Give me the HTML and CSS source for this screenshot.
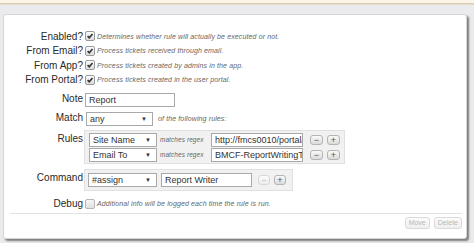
FILE: index.html
```html
<!DOCTYPE html>
<html lang="en">
<head>
    <meta charset="UTF-8">
    <title>Rule Editor</title>
    <link rel="stylesheet" href="styles.css">
</head>
<body>

<div class="topbar"></div>

<div class="card">
    <div class="row check-row">
        <label class="lbl">Enabled?</label>
        <span class="cb on"><svg viewBox="0 0 9 9"><path d="M1.8 4.6 L3.7 6.6 L7.3 2.2" /></svg></span>
        <span class="hint">Determines whether rule will actually be executed or not.</span>
    </div>
    <div class="row check-row">
        <label class="lbl">From Email?</label>
        <span class="cb on"><svg viewBox="0 0 9 9"><path d="M1.8 4.6 L3.7 6.6 L7.3 2.2" /></svg></span>
        <span class="hint">Process tickets received through email.</span>
    </div>
    <div class="row check-row">
        <label class="lbl">From App?</label>
        <span class="cb on"><svg viewBox="0 0 9 9"><path d="M1.8 4.6 L3.7 6.6 L7.3 2.2" /></svg></span>
        <span class="hint">Process tickets created by admins in the app.</span>
    </div>
    <div class="row check-row">
        <label class="lbl">From Portal?</label>
        <span class="cb on"><svg viewBox="0 0 9 9"><path d="M1.8 4.6 L3.7 6.6 L7.3 2.2" /></svg></span>
        <span class="hint">Process tickets created in the user portal.</span>
    </div>

    <div class="row note-row">
        <label class="lbl">Note</label>
        <div class="field note">Report</div>
    </div>

    <div class="row match-row">
        <label class="lbl">Match</label>
        <div class="select match">any<span class="arrow">▼</span></div>
        <span class="hint">of the following rules:</span>
    </div>

    <div class="row rules-row">
        <label class="lbl">Rules</label>
        <div class="group rules">
            <div class="line">
                <div class="select">Site Name<span class="arrow">▼</span></div>
                <span class="hint op">matches regex</span>
                <div class="field value">http://fmcs0010/portal/pa</div>
                <span class="btn-sm">−</span>
                <span class="btn-sm">+</span>
            </div>
            <div class="line">
                <div class="select">Email To<span class="arrow">▼</span></div>
                <span class="hint op">matches regex</span>
                <div class="field value">BMCF-ReportWritingTea</div>
                <span class="btn-sm">−</span>
                <span class="btn-sm">+</span>
            </div>
        </div>
    </div>

    <div class="row command-row">
        <label class="lbl">Command</label>
        <div class="group command">
            <div class="line">
                <div class="select cmd">#assign<span class="arrow">▼</span></div>
                <div class="field arg">Report Writer</div>
                <span class="btn-sm off">−</span>
                <span class="btn-sm">+</span>
            </div>
        </div>
    </div>

    <div class="row check-row debug-row">
        <label class="lbl">Debug</label>
        <span class="cb"></span>
        <span class="hint">Additional info will be logged each time the rule is run.</span>
    </div>

    <div class="actions">
        <span class="btn-dis">Move</span>
        <span class="btn-dis">Delete</span>
    </div>
</div>

</body>
</html>
```

FILE: styles.css
```css
body {
    font-family: "Liberation Sans", Arial, sans-serif;
    background-color: #ebebed;
    color: #2a2a2a;
    margin: 0;
    padding: 0;
    width: 474px;
    height: 243px;
    overflow: hidden;
}

.topbar {
    height: 3px;
    background-color: #fbf5e6;
    border-bottom: 1px solid #d9ccb2;
    box-shadow: 0 1px 1px #e4dccb;
}

.card {
    margin: 10px 7px 0 3px;
    height: 225px;
    background-color: #fff;
    border: 1px solid #d6d6d6;
    border-radius: 3px;
    box-shadow: 2px 2px 2px #7d7d7d;
    box-sizing: border-box;
    padding-top: 14px;
}

.row {
    display: flex;
    align-items: center;
}

.lbl {
    width: 79px;
    flex: none;
    text-align: right;
    font-size: 10px;
    margin-right: 2px;
}

.check-row {
    height: 14px;
}

.check-row + .check-row {
    margin-top: 0.5px;
}

.cb {
    width: 8px;
    height: 8px;
    border: 1px solid #9a9a9a;
    border-radius: 2px;
    background: linear-gradient(#fdfdfd, #dcdcdc);
    margin: 0 2px 0 0;
    flex: none;
}

.cb svg {
    width: 8px;
    height: 8px;
    display: block;
}

.cb path {
    fill: none;
    stroke: #333;
    stroke-width: 1.8;
}

.hint {
    font-size: 7px;
    font-style: italic;
    color: #666;
    letter-spacing: 0.12px;
    white-space: nowrap;
}

.field, .select {
    height: 14px;
    box-sizing: border-box;
    border: 1px solid #a9a9a9;
    background-color: #fff;
    font-size: 9px;
    color: #333;
    padding: 0 3px;
    line-height: 12px;
    white-space: nowrap;
    overflow: hidden;
    text-overflow: clip;
}

.note-row {
    margin-top: 6px;
}

.note-row .lbl, .match-row .lbl {
    align-self: flex-start;
}

.field.note {
    width: 90px;
}

.match-row {
    margin-top: 5px;
}

.select {
    position: relative;
    width: 68px;
    flex: none;
}

.select.match {
    width: 67px;
    margin-right: 5px;
    margin-left: 1px;
}

.arrow {
    position: absolute;
    right: 5px;
    top: 0;
    font-size: 6px;
    color: #333;
}

.rules-row {
    margin-top: 4px;
    align-items: flex-start;
}

.rules-row .lbl, .command-row .lbl {
    margin-top: 3px;
}

.group {
    background-color: #f1f1f1;
    border: 1px solid #e0e0e0;
    display: flex;
    flex-direction: column;
    margin-left: -1px;
}

.group.rules {
    padding: 2px 4px 1px 4px;
    gap: 1px;
}

.line {
    display: flex;
    align-items: center;
}

.op {
    margin: 0 3px;
    width: 48px;
    font-size: 6.4px;
    flex: none;
}

.field.value {
    width: 92px;
    margin-right: 7px;
    padding-right: 0;
    flex: none;
}

.btn-sm {
    width: 13px;
    height: 10px;
    box-sizing: border-box;
    border: 1px solid #b4b4b4;
    border-radius: 3px;
    background: linear-gradient(#fafafa, #dadada);
    font-size: 9px;
    line-height: 8px;
    text-align: center;
    color: #555;
    flex: none;
}

.btn-sm + .btn-sm {
    margin-left: 4px;
}

.btn-sm.off {
    color: #bbb;
    border-color: #d8d8d8;
    background: linear-gradient(#fbfbfb, #ececec);
}

.command-row {
    margin-top: 5px;
    align-items: flex-start;
}

.group.command {
    padding: 3px 6px 3px 3px;
}

.group.command .btn-sm {
    width: 12px;
}

.select.cmd {
    width: 69px;
    margin-right: 4px;
}

.field.arg {
    width: 91px;
    margin-right: 6px;
}

.debug-row {
    margin-top: 6px;
}

.debug-row .cb {
    background: linear-gradient(#f6f6f6, #e2e2e2);
    border-color: #b4b4b4;
}

.actions {
    margin: 2px 4px 0 6px;
    border-top: 1px solid #e2e2e2;
    padding-top: 3px;
    display: flex;
    justify-content: flex-end;
    gap: 4px;
}

.btn-dis {
    font-size: 7px;
    color: #b8b8b8;
    border: 1px solid #dadada;
    border-radius: 3px;
    background: linear-gradient(#fbfbfb, #efefef);
    padding: 1px 3px;
    line-height: 8px;
}
```
